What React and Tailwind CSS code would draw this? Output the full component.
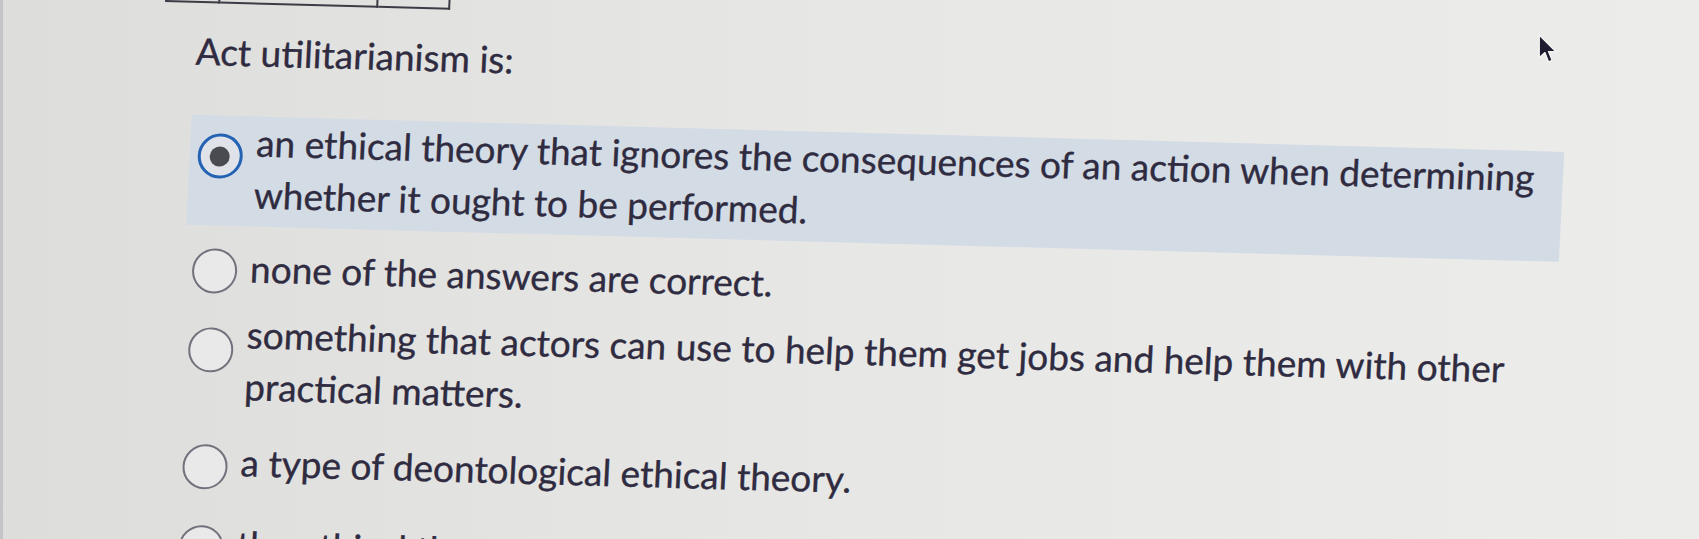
import clsx from 'clsx';

function Radio({ selected, className }) {
  if (selected) {
    return (
      <span
        className={clsx(
          'flex size-[45px] shrink-0 items-center justify-center rounded-full border-[3px] border-[#2462b4] bg-[#dfe3e9]',
          className
        )}
      >
        <span className="size-[20px] rounded-full bg-[#4a4b51]" />
      </span>
    );
  }
  return (
    <span
      className={clsx(
        'block size-[45px] shrink-0 rounded-full border-2 border-[#73717c] bg-[#e9e9e9]',
        className
      )}
    />
  );
}

function Option({ children, selected, className, radioClass }) {
  return (
    <div
      className={clsx(
        'flex items-start pl-[7.5px] pr-4',
        selected && 'bg-[#d3dbe5]',
        className
      )}
    >
      <Radio selected={selected} className={radioClass} />
      <p className="ml-[13.5px] text-[37px] leading-[52px]">{children}</p>
    </div>
  );
}

export default function App() {
  return (
    <div className="relative h-[539px] w-[1699px] overflow-hidden bg-linear-to-r from-[#dddddc] via-[#e7e7e6] to-[#ececeb] font-['Lato','Liberation_Sans',sans-serif] text-[#2f2b40] shadow-[inset_3px_0_0_#c4c4c6] [-webkit-text-stroke:0.35px_#2f2b40]">
      <div className="flex origin-[200px_150px] flex-col [transform:rotate(1.55deg)_skewX(-1.25deg)]">
        {/* bottom edge of the table above */}
        <div className="-mt-[37px] ml-[158px] flex h-[40px]">
          <div className="w-[55px] border-b-2 border-l-2 border-r-2 border-[#3d3b45]" />
          <div className="w-[158px] border-b-2 border-r-2 border-[#3d3b45]" />
          <div className="w-[72px] border-b-2 border-r-2 border-[#3d3b45]" />
        </div>

        <h1 className="ml-[191px] mt-[22px] text-[37px] font-normal leading-[52px]">
          Act utilitarianism is:
        </h1>

        <div className="ml-[190px] mt-[38px] flex w-[1373px] flex-col">
          <Option selected className="pb-[6px]" radioClass="mt-[18px]">
            an ethical theory that ignores the consequences of an action when determining whether it
            ought to be performed.
          </Option>
          <Option className="mt-[16px]" radioClass="mt-[7px]">
            none of the answers are correct.
          </Option>
          <Option className="mt-[14px]" radioClass="mt-[20px]">
            something that actors can use to help them get jobs and help them with other practical
            matters.
          </Option>
          <Option className="mt-[24px]" radioClass="mt-[9px]">
            a type of deontological ethical theory.
          </Option>
          <Option className="mt-[28px]" radioClass="mt-[8px]">
            the ethical theory that holds that the right action is the one that produces the
            greatest good.
          </Option>
        </div>
      </div>

      {/* mouse pointer */}
      <svg
        className="absolute left-[1537px] top-[34px]"
        width="21"
        height="31"
        viewBox="0 0 20 30"
      >
        <path
          d="M2 1 L2 23 L7.5 18 L11 27 L14.5 25.5 L11 17 L18 17 Z"
          fill="#1e1c30"
          stroke="#f4f4f4"
          strokeWidth="1.3"
          strokeLinejoin="round"
        />
      </svg>
    </div>
  );
}
